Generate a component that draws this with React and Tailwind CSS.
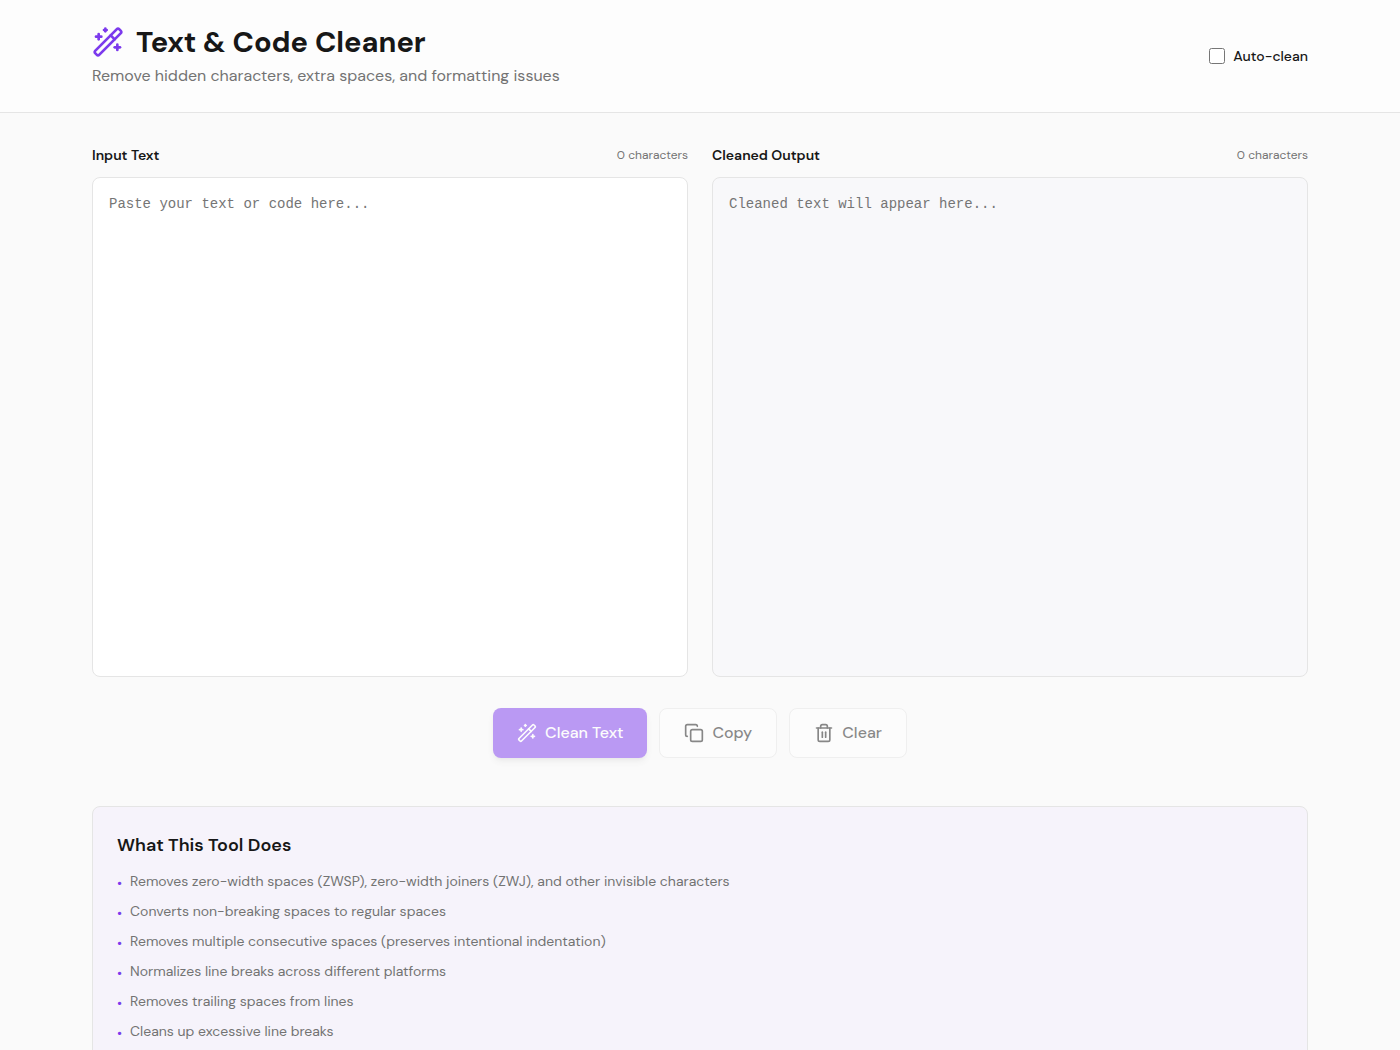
import { useState } from "react";
import { WandSparkles, Copy, Trash2 } from "lucide-react";

const FEATURES = [
  "Removes zero-width spaces (ZWSP), zero-width joiners (ZWJ), and other invisible characters",
  "Converts non-breaking spaces to regular spaces",
  "Removes multiple consecutive spaces (preserves intentional indentation)",
  "Normalizes line breaks across different platforms",
  "Removes trailing spaces from lines",
  "Cleans up excessive line breaks",
];

// Strip invisible characters and tidy up whitespace
const cleanText = (text) =>
  text
    .replace(/[\u200B-\u200D\u2060\uFEFF\u00AD]/g, "")
    .replace(/\u00A0/g, " ")
    .replace(/\r\n?/g, "\n")
    .replace(/(\S) {2,}/g, "$1 ")
    .replace(/[ \t]+$/gm, "")
    .replace(/\n{3,}/g, "\n\n");

export default function App() {
  const [input, setInput] = useState("");
  const [output, setOutput] = useState("");
  const [autoClean, setAutoClean] = useState(false);

  const handleInput = (e) => {
    setInput(e.target.value);
    if (autoClean) setOutput(cleanText(e.target.value));
  };

  const handleClear = () => {
    setInput("");
    setOutput("");
  };

  return (
    <div className="min-h-screen bg-[#fafafa] font-['DM_Sans',Inter,sans-serif] text-[#171717]">
      {/* Header */}
      <header className="border-b border-[#e5e5e5] bg-[#fdfdfd]">
        <div className="mx-auto flex max-w-7xl items-center justify-between px-8 py-6">
          <div>
            <h1 className="flex items-center gap-3 text-[29px] leading-9 font-bold">
              <WandSparkles size={32} className="text-[#7c3aed]" />
              Text &amp; Code Cleaner
            </h1>
            <p className="mt-1 text-base text-[#737373]">
              Remove hidden characters, extra spaces, and formatting issues
            </p>
          </div>
          <label className="flex items-center gap-2 text-sm font-medium">
            <input
              type="checkbox"
              checked={autoClean}
              onChange={(e) => setAutoClean(e.target.checked)}
              className="h-4 w-4"
            />
            Auto-clean
          </label>
        </div>
      </header>

      <main className="mx-auto max-w-7xl px-8 py-8">
        {/* Editors */}
        <div className="grid grid-cols-1 gap-6 md:grid-cols-2">
          <div className="flex flex-col gap-3">
            <div className="flex items-center justify-between">
              <label htmlFor="input" className="text-sm font-semibold">Input Text</label>
              <span className="text-xs text-[#737373]">{input.length} characters</span>
            </div>
            <textarea
              id="input"
              value={input}
              onChange={handleInput}
              placeholder="Paste your text or code here..."
              className="h-[500px] w-full resize-none rounded-lg border border-[#e5e5e5] bg-white p-4 font-['Liberation_Mono',monospace] text-sm placeholder:text-[#757575]"
            />
          </div>
          <div className="flex flex-col gap-3">
            <div className="flex items-center justify-between">
              <label htmlFor="output" className="text-sm font-semibold">Cleaned Output</label>
              <span className="text-xs text-[#737373]">{output.length} characters</span>
            </div>
            <textarea
              id="output"
              readOnly
              value={output}
              placeholder="Cleaned text will appear here..."
              className="h-[500px] w-full resize-none rounded-lg border border-[#e5e5e5] bg-[#f8f8fa] p-4 font-['Liberation_Mono',monospace] text-sm placeholder:text-[#757575]"
            />
          </div>
        </div>

        {/* Actions */}
        <div className="mt-[31px] flex flex-wrap justify-center gap-3">
          <button
            onClick={() => setOutput(cleanText(input))}
            disabled={!input}
            className="flex items-center gap-2 rounded-lg bg-[#7c3aed] px-6 py-3 font-medium text-white shadow-md disabled:opacity-50"
          >
            <WandSparkles size={20} />
            Clean Text
          </button>
          <button
            onClick={() => navigator.clipboard.writeText(output)}
            disabled={!output}
            className="flex items-center gap-2 rounded-lg border border-[#e5e5e5] bg-white px-6 py-3 font-medium disabled:opacity-50"
          >
            <Copy size={20} />
            Copy
          </button>
          <button
            onClick={handleClear}
            disabled={!input && !output}
            className="flex items-center gap-2 rounded-lg border border-[#e5e5e5] bg-white px-6 py-3 font-medium disabled:opacity-50"
          >
            <Trash2 size={20} />
            Clear
          </button>
        </div>

        {/* Info */}
        <section className="mt-12 rounded-lg border border-[#e5e5e5] bg-[#f6f3fb] p-6">
          <h2 className="mb-3 text-lg font-semibold">What This Tool Does</h2>
          <ul className="space-y-2 text-sm text-[#737373]">
            {FEATURES.map((feature) => (
              <li key={feature} className="flex items-start gap-2">
                <span className="mt-0.5 text-[#7c3aed]">•</span>
                <span>{feature}</span>
              </li>
            ))}
          </ul>
        </section>
      </main>
    </div>
  );
}
